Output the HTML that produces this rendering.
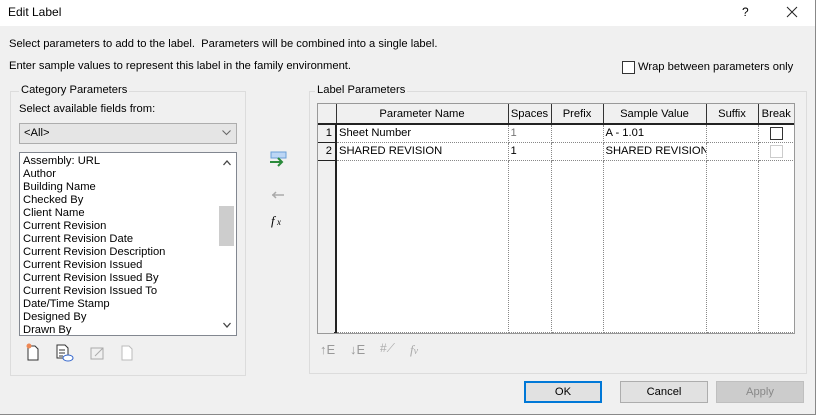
<!DOCTYPE html>
<html><head><style>
*{box-sizing:border-box;margin:0;padding:0}
body{width:822px;height:418px;background:#fff;font-family:"Liberation Sans",sans-serif;font-size:11.2px;color:#000;position:relative;overflow:hidden}
.a{position:absolute;white-space:nowrap}
.win{position:absolute;left:0;top:0;width:816px;height:415px;background:#f0f0f0;border-right:1px solid #888;border-bottom:1px solid #888}
.tb{position:absolute;left:0;top:0;width:815px;height:26px;background:#fff}
.grp{position:absolute;border:1px solid #dcdcdc}
.lg{position:absolute;top:-8px;background:#f0f0f0;padding:0 2px}
.btn{position:absolute;height:22px;border:1px solid #adadad;background:#e1e1e1;text-align:center;line-height:20px}
td{border-right:1px dotted #888;border-bottom:1px dotted #888;height:18px;padding:0 2px;white-space:nowrap;overflow:hidden}
table{border-collapse:collapse;position:absolute;left:0;top:0;table-layout:fixed;width:476px}
th{font-weight:normal;background:#f0f0f0;border-right:1px solid #333;border-bottom:2px solid #222;height:20px;overflow:hidden;white-space:nowrap}
.rh{background:#f0f0f0;border-right:2px solid #222;border-bottom:1px solid #222;text-align:right;padding-right:3px}
.list div{height:13px;line-height:13px}
</style></head><body>
<div class="win"></div>
<div class="tb"></div>
<div class="a" style="left:8px;top:5px;font-size:12px">Edit Label</div>
<div class="a" style="left:742px;top:5px;font-size:12px">?</div>
<svg class="a" style="left:786px;top:6px" width="12" height="12"><path d="M1 1l10 10M11 1L1 11" stroke="#222" stroke-width="1"/></svg>
<div class="a" style="left:9px;top:38px">Select parameters to add to the label.&nbsp; Parameters will be combined into a single label.</div>
<div class="a" style="left:9px;top:60px">Enter sample values to represent this label in the family environment.</div>
<div class="a" style="left:622px;top:61px;width:13px;height:13px;border:1px solid #333;background:#fff"></div>
<div class="a" style="left:638px;top:61px">Wrap between parameters only</div>

<div class="grp" style="left:10px;top:91px;width:236px;height:285px"><div class="lg" style="left:8px">Category Parameters</div></div>
<div class="a" style="left:19px;top:103px">Select available fields from:</div>
<div class="a" style="left:19px;top:123px;width:218px;height:21px;border:1px solid #adadad;background:#e5e5e5;padding:3px 4px">&lt;All&gt;<svg style="position:absolute;right:5px;top:6px" width="9" height="6"><path d="M0.5 0.5l4 4 4-4" stroke="#666" fill="none"/></svg></div>
<div class="a list" style="left:19px;top:152px;width:218px;height:184px;border:1px solid #828790;background:#fff;overflow:hidden;padding:2px 0 0 3px">
<div>Assembly: URL</div><div>Author</div><div>Building Name</div><div>Checked By</div><div>Client Name</div><div>Current Revision</div><div>Current Revision Date</div><div>Current Revision Description</div><div>Current Revision Issued</div><div>Current Revision Issued By</div><div>Current Revision Issued To</div><div>Date/Time Stamp</div><div>Designed By</div><div>Drawn By</div>
</div>
<div class="a" style="left:219px;top:206px;width:15px;height:40px;background:#cdcdcd"></div>
<svg class="a" style="left:223px;top:160px" width="8" height="6"><path d="M0.5 5l3.5-4 3.5 4" stroke="#444" fill="none" stroke-width="1.3"/></svg>
<svg class="a" style="left:223px;top:322px" width="8" height="6"><path d="M0.5 1l3.5 4 3.5-4" stroke="#444" fill="none" stroke-width="1.3"/></svg>
<svg class="a" style="left:24px;top:342px" width="120" height="20"><path d="M4 4h7l3 3v11H4z" fill="#fff" stroke="#333"/><circle cx="5" cy="4" r="2.5" fill="#e85"/><path d="M33 3h8l3 3v10H33z" fill="#fff" stroke="#333"/><path d="M35 8h6M35 11h6M35 14h4" stroke="#333"/><ellipse cx="44" cy="16" rx="5" ry="3" fill="#fff" stroke="#36c"/><path d="M67 6h12v11H67z" fill="none" stroke="#aaa"/><path d="M71 14l8-8" stroke="#aaa"/><path d="M98 4h7l3 3v11H98z" fill="#fff" stroke="#bbb"/></svg>
<svg class="a" style="left:268px;top:150px" width="22" height="80"><rect x="3" y="2" width="15" height="6" fill="#bcd6f5" stroke="#6a9fd8"/><path d="M2 12h12M10 8l4 4-4 4" stroke="#2a8a3a" stroke-width="2" fill="none"/><path d="M4 45h12M8 42l-3 3 3 3" stroke="#aaa" stroke-width="1.5" fill="none"/><text x="3" y="75" font-family="Liberation Serif" font-style="italic" font-size="13">f</text><text x="9" y="75" font-family="Liberation Serif" font-style="italic" font-size="9">x</text></svg>

<div class="grp" style="left:309px;top:91px;width:498px;height:283px"><div class="lg" style="left:5px">Label Parameters</div></div>
<div class="a" style="left:317px;top:103px;width:478px;height:231px;border:1px solid #999;background:#fff;overflow:hidden">
<div class="a" style="left:0;top:0;width:18px;height:230px;background:#f0f0f0;border-right:2px solid #222"></div>
<table>
<colgroup><col style="width:18px"><col style="width:172px"><col style="width:43px"><col style="width:52px"><col style="width:103px"><col style="width:52px"><col style="width:36px"></colgroup>
<tr><th></th><th>Parameter Name</th><th>Spaces</th><th>Prefix</th><th>Sample Value</th><th>Suffix</th><th style="border-right:none">Break</th></tr>
<tr><td class="rh">1</td><td>Sheet Number</td><td style="color:#777">1</td><td></td><td>A - 1.01</td><td></td><td style="text-align:center"><span style="display:inline-block;width:13px;height:13px;border:1px solid #333;vertical-align:middle"></span></td></tr>
<tr><td class="rh">2</td><td>SHARED REVISION</td><td>1</td><td></td><td>SHARED REVISION</td><td></td><td style="text-align:center"><span style="display:inline-block;width:13px;height:13px;border:1px solid #ccc;vertical-align:middle"></span></td></tr>
<tr><td class="rh" style="height:172px;border-bottom:none"></td><td style="height:172px"></td><td></td><td></td><td></td><td></td><td></td></tr>
</table>
</div>
<div class="a" style="left:320px;top:342px;color:#999;font-size:13px">↑E</div>
<div class="a" style="left:350px;top:342px;color:#999;font-size:13px">↓E</div>
<div class="a" style="left:380px;top:341px;color:#aaa;font-size:12px">#⟋</div>
<div class="a" style="left:410px;top:342px;color:#aaa;font-family:'Liberation Serif';font-style:italic;font-size:13px">f<span style="font-size:10px">v</span></div>

<div class="btn" style="left:524px;top:381px;width:78px;border:2px solid #0078d7;line-height:18px">OK</div>
<div class="btn" style="left:620px;top:381px;width:88px">Cancel</div>
<div class="btn" style="left:716px;top:381px;width:88px;background:#cccccc;border-color:#bfbfbf;color:#888">Apply</div>
</body></html>
